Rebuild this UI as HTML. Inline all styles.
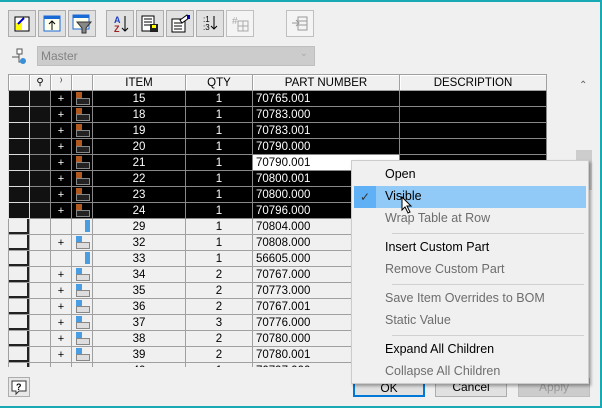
<!DOCTYPE html>
<html><head><meta charset="utf-8"><style>
*{box-sizing:border-box;margin:0;padding:0}
body{width:602px;height:408px;background:#f0f0f0;position:relative;overflow:hidden;font-family:"Liberation Sans",sans-serif;font-size:12px;color:#000}
.a{position:absolute}
.tb{position:absolute;top:10px;width:28px;height:27px;background:#e1e1e1;border:1px solid #adadad}
.tb.d{background:#f4f4f4;border-color:#bfbfbf}
table{position:absolute;left:8px;top:74px;border-collapse:collapse;table-layout:fixed;width:538px}
td{height:16px;border:1px solid #a0a0a0;padding:0 3px;white-space:nowrap;overflow:hidden;line-height:14px;font-size:11.5px}
tr.h td{background:#f0f0f0;text-align:center;box-shadow:inset 1px 1px 0 #fff}
tr.s td{background:#000;color:#fff;border-color:#888}
td.rh{background:#f0f0f0;box-shadow:inset -2px -2px 0 #222}
tr.s td.rh{background:#111;box-shadow:none;border-color:#ddd}
td.c2{background:#f0f0f0}
tr.s td.c2{background:#111}
td.c{text-align:center}
.pl{font-size:11px;text-align:center}
.ic{display:inline-block;position:relative;width:18px;height:14px;vertical-align:middle}
.ic i{position:absolute;display:block}
.m{position:absolute;left:351px;top:160px;width:238px;height:224px;background:#f0f0f0;border:1px solid #ccc;box-shadow:2px 2px 3px rgba(0,0,0,.35)}
.mi{position:absolute;left:33px;font-size:12.5px;color:#000}
.mi.g{color:#6d6d6d}
.sep{position:absolute;left:40px;width:192px;height:1px;background:#d0d0d0}
.btn{position:absolute;top:378px;width:72px;height:19px;border:1px solid #adadad;background:#e1e1e1;text-align:center;line-height:17px;font-size:12px}
</style></head><body>
<div class="a" style="left:0;top:0;width:602px;height:2px;background:#17a9b4"></div>
<div class="a" style="left:600px;top:0;width:2px;height:408px;background:#17a9b4"></div>

<div class="tb" style="left:8px"><svg width="26" height="25"><rect x="6" y="6" width="14" height="14" fill="#fff" stroke="#000"/><rect x="7" y="12" width="6" height="7" fill="#ff0"/><path d="M9 13 L15 7" stroke="#00c" stroke-width="2"/></svg></div>
<div class="tb" style="left:38px"><svg width="26" height="25"><rect x="5" y="5" width="16" height="15" fill="#ffe" stroke="#1a6ad6"/><rect x="5" y="5" width="16" height="3" fill="#1a6ad6"/><path d="M13 19V10M10 13l3-3 3 3" stroke="#000" fill="none"/></svg></div>
<div class="tb" style="left:68px"><svg width="26" height="25"><rect x="4" y="4" width="16" height="14" fill="#ffe" stroke="#1a6ad6"/><rect x="4" y="4" width="16" height="3" fill="#1a6ad6"/><path d="M8 11h14l-5 6v5h-4v-5z" fill="#888" stroke="#333"/></svg></div>
<div class="tb" style="left:106px"><svg width="26" height="25"><text x="7" y="12" font-size="9" font-family="Liberation Sans" font-weight="bold" fill="#2040c0">A</text><text x="7" y="21" font-size="9" font-family="Liberation Sans" font-weight="bold" fill="#a02020">Z</text><path d="M18 5v15M15 17l3 3 3-3" stroke="#000" fill="none"/></svg></div>
<div class="tb" style="left:136px"><svg width="26" height="25"><rect x="5" y="5" width="12" height="15" fill="#fff" stroke="#000"/><path d="M7 8h8M7 11h8M7 14h8" stroke="#000"/><rect x="13" y="13" width="8" height="8" fill="#222"/><rect x="15" y="14" width="4" height="3" fill="#ff0"/></svg></div>
<div class="tb" style="left:166px"><svg width="26" height="25"><rect x="5" y="8" width="13" height="13" fill="#fff" stroke="#000"/><path d="M7 12h8M7 15h8M7 18h8" stroke="#000"/><path d="M13 9l7-5 2 3-7 5z" fill="#fff" stroke="#000"/><rect x="20" y="4" width="3" height="4" fill="#00a"/></svg></div>
<div class="tb" style="left:196px"><svg width="26" height="25"><text x="6" y="11" font-size="8" font-family="Liberation Sans">:1</text><text x="6" y="19" font-size="8" font-family="Liberation Sans">:3</text><path d="M17 5v13M14 15l3 3 3-3" stroke="#000" fill="none"/></svg></div>
<div class="tb d" style="left:226px"><svg width="26" height="25"><text x="5" y="13" font-size="10" fill="#aaa" font-family="Liberation Sans">#</text><rect x="11" y="10" width="10" height="10" fill="none" stroke="#aaa"/><path d="M11 15h10M16 10v10" stroke="#aaa"/></svg></div>
<div class="tb d" style="left:286px"><svg width="26" height="25"><rect x="11" y="6" width="9" height="13" fill="none" stroke="#999"/><path d="M11 10h9M11 14h9M5 12h7M9 9l3 3-3 3" stroke="#999" fill="none"/></svg></div>

<svg class="a" style="left:10px;top:47px" width="18" height="18"><rect x="7" y="2" width="5" height="5" fill="#fff" stroke="#555"/><path d="M9 7v8h2M2 10h7" stroke="#555" fill="none"/><circle cx="13" cy="14" r="3" fill="#3a8fd8"/></svg>
<div class="a" style="left:37px;top:46px;width:278px;height:20px;background:#ccc;border:1px solid #bfbfbf;color:#838383;padding:2px 3px;font-size:12px">Master<span class="a" style="right:6px;top:1px;color:#aaa;font-size:10px">&#8964;</span></div>

<table>
<colgroup><col style="width:21px"><col style="width:21px"><col style="width:21px"><col style="width:21px"><col style="width:93px"><col style="width:67px"><col style="width:147px"><col style="width:147px"></colgroup>
<tr class="h"><td></td><td style="font-size:10px">&#9906;</td><td style="font-size:10px">&#8318;</td><td></td><td>ITEM</td><td>QTY</td><td>PART NUMBER</td><td>DESCRIPTION</td></tr>
<tr class="s"><td class="rh"></td><td class="c2"></td><td class="pl">+</td><td><span class="ic"><i style="left:1px;top:1px;width:6px;height:7px;background:#b05a20"></i><i style="left:1px;top:7px;width:14px;height:7px;border:1px solid #888;background:#222"></i></span></td><td class="c">15</td><td class="c">1</td><td>70765.001</td><td></td></tr>
<tr class="s"><td class="rh"></td><td class="c2"></td><td class="pl">+</td><td><span class="ic"><i style="left:1px;top:1px;width:6px;height:7px;background:#b05a20"></i><i style="left:1px;top:7px;width:14px;height:7px;border:1px solid #888;background:#222"></i></span></td><td class="c">18</td><td class="c">1</td><td>70783.000</td><td></td></tr>
<tr class="s"><td class="rh"></td><td class="c2"></td><td class="pl">+</td><td><span class="ic"><i style="left:1px;top:1px;width:6px;height:7px;background:#b05a20"></i><i style="left:1px;top:7px;width:14px;height:7px;border:1px solid #888;background:#222"></i></span></td><td class="c">19</td><td class="c">1</td><td>70783.001</td><td></td></tr>
<tr class="s"><td class="rh"></td><td class="c2"></td><td class="pl">+</td><td><span class="ic"><i style="left:1px;top:1px;width:6px;height:7px;background:#b05a20"></i><i style="left:1px;top:7px;width:14px;height:7px;border:1px solid #888;background:#222"></i></span></td><td class="c">20</td><td class="c">1</td><td>70790.000</td><td></td></tr>
<tr class="s"><td class="rh"></td><td class="c2"></td><td class="pl">+</td><td><span class="ic"><i style="left:1px;top:1px;width:6px;height:7px;background:#b05a20"></i><i style="left:1px;top:7px;width:14px;height:7px;border:1px solid #888;background:#222"></i></span></td><td class="c">21</td><td class="c">1</td><td style="background:#fff;color:#000">70790.001</td><td></td></tr>
<tr class="s"><td class="rh"></td><td class="c2"></td><td class="pl">+</td><td><span class="ic"><i style="left:1px;top:1px;width:6px;height:7px;background:#b05a20"></i><i style="left:1px;top:7px;width:14px;height:7px;border:1px solid #888;background:#222"></i></span></td><td class="c">22</td><td class="c">1</td><td>70800.001</td><td></td></tr>
<tr class="s"><td class="rh"></td><td class="c2"></td><td class="pl">+</td><td><span class="ic"><i style="left:1px;top:1px;width:6px;height:7px;background:#b05a20"></i><i style="left:1px;top:7px;width:14px;height:7px;border:1px solid #888;background:#222"></i></span></td><td class="c">23</td><td class="c">1</td><td>70800.000</td><td></td></tr>
<tr class="s"><td class="rh"></td><td class="c2"></td><td class="pl">+</td><td><span class="ic"><i style="left:1px;top:1px;width:6px;height:7px;background:#b05a20"></i><i style="left:1px;top:7px;width:14px;height:7px;border:1px solid #888;background:#222"></i></span></td><td class="c">24</td><td class="c">1</td><td>70796.000</td><td></td></tr>
<tr><td class="rh"></td><td class="c2"></td><td></td><td><span class="ic"><i style="left:10px;top:1px;width:5px;height:12px;background:#4a9de0"></i></span></td><td class="c">29</td><td class="c">1</td><td>70804.000</td><td></td></tr>
<tr><td class="rh"></td><td class="c2"></td><td class="pl">+</td><td><span class="ic"><i style="left:1px;top:1px;width:6px;height:7px;background:#4a9de0"></i><i style="left:1px;top:7px;width:14px;height:7px;border:1px solid #888;background:#ddd"></i></span></td><td class="c">32</td><td class="c">1</td><td>70808.000</td><td></td></tr>
<tr><td class="rh"></td><td class="c2"></td><td></td><td><span class="ic"><i style="left:10px;top:1px;width:5px;height:12px;background:#4a9de0"></i></span></td><td class="c">33</td><td class="c">1</td><td>56605.000</td><td></td></tr>
<tr><td class="rh"></td><td class="c2"></td><td class="pl">+</td><td><span class="ic"><i style="left:1px;top:1px;width:6px;height:7px;background:#4a9de0"></i><i style="left:1px;top:7px;width:14px;height:7px;border:1px solid #888;background:#ddd"></i></span></td><td class="c">34</td><td class="c">2</td><td>70767.000</td><td></td></tr>
<tr><td class="rh"></td><td class="c2"></td><td class="pl">+</td><td><span class="ic"><i style="left:1px;top:1px;width:6px;height:7px;background:#4a9de0"></i><i style="left:1px;top:7px;width:14px;height:7px;border:1px solid #888;background:#ddd"></i></span></td><td class="c">35</td><td class="c">2</td><td>70773.000</td><td></td></tr>
<tr><td class="rh"></td><td class="c2"></td><td class="pl">+</td><td><span class="ic"><i style="left:1px;top:1px;width:6px;height:7px;background:#4a9de0"></i><i style="left:1px;top:7px;width:14px;height:7px;border:1px solid #888;background:#ddd"></i></span></td><td class="c">36</td><td class="c">2</td><td>70767.001</td><td></td></tr>
<tr><td class="rh"></td><td class="c2"></td><td class="pl">+</td><td><span class="ic"><i style="left:1px;top:1px;width:6px;height:7px;background:#4a9de0"></i><i style="left:1px;top:7px;width:14px;height:7px;border:1px solid #888;background:#ddd"></i></span></td><td class="c">37</td><td class="c">3</td><td>70776.000</td><td></td></tr>
<tr><td class="rh"></td><td class="c2"></td><td class="pl">+</td><td><span class="ic"><i style="left:1px;top:1px;width:6px;height:7px;background:#4a9de0"></i><i style="left:1px;top:7px;width:14px;height:7px;border:1px solid #888;background:#ddd"></i></span></td><td class="c">38</td><td class="c">2</td><td>70780.000</td><td></td></tr>
<tr><td class="rh"></td><td class="c2"></td><td class="pl">+</td><td><span class="ic"><i style="left:1px;top:1px;width:6px;height:7px;background:#4a9de0"></i><i style="left:1px;top:7px;width:14px;height:7px;border:1px solid #888;background:#ddd"></i></span></td><td class="c">39</td><td class="c">2</td><td>70780.001</td><td></td></tr>
<tr><td class="rh"></td><td class="c2"></td><td></td><td></td><td class="c">40</td><td class="c">1</td><td>70797.000</td><td></td></tr>
</table>
<div class="a" style="left:0;top:367px;width:575px;height:41px;background:#f0f0f0"></div>
<div class="a" style="left:0;top:406px;width:602px;height:2px;background:#17a9b4"></div>

<div class="a" style="left:575px;top:74px;width:18px;height:290px;background:#f0f0f0"></div>
<div class="a" style="left:579px;top:80px;color:#606060;font-size:10px">&#8963;</div>
<div class="a" style="left:576px;top:150px;width:16px;height:40px;background:#cdcdcd"></div>

<div class="a" style="left:8px;top:377px;width:22px;height:20px;border:1px solid #adadad;background:#e8e8e8"><svg width="20" height="18"><path d="M3 3h14v10h-7l-3 3v-3H3z" fill="#fff" stroke="#333"/><text x="7" y="12" font-size="9" font-family="Liberation Sans" font-weight="bold">?</text></svg></div>

<div class="btn" style="left:353px;border:2px solid #0078d7">OK</div>
<div class="btn" style="left:435px">Cancel</div>
<div class="btn" style="left:518px;color:#9a9a9a;background:#ccc;border-color:#bfbfbf">Apply</div>

<div class="m">
<div class="mi" style="top:6px">Open</div>
<div class="a" style="left:2px;top:25px;width:232px;height:22px;background:#91c9f7"></div>
<div class="a" style="left:2px;top:25px;width:22px;height:22px;background:#5fb0f5;color:#333;text-align:center;line-height:22px;font-size:12px">&#10003;</div>
<div class="mi" style="top:28px">Visible</div>
<div class="mi g" style="top:50px">Wrap Table at Row</div>
<div class="sep" style="top:72px"></div>
<div class="mi" style="top:79px">Insert Custom Part</div>
<div class="mi g" style="top:101px">Remove Custom Part</div>
<div class="sep" style="top:123px"></div>
<div class="mi g" style="top:130px">Save Item Overrides to BOM</div>
<div class="mi g" style="top:152px">Static Value</div>
<div class="sep" style="top:174px"></div>
<div class="mi" style="top:181px">Expand All Children</div>
<div class="mi g" style="top:203px">Collapse All Children</div>
<svg class="a" style="left:49px;top:35px" width="12" height="18"><path d="M1 1v13l3-3 3 6 2-1-3-6h4z" fill="#fff" stroke="#000"/></svg>
</div>
</body></html>
